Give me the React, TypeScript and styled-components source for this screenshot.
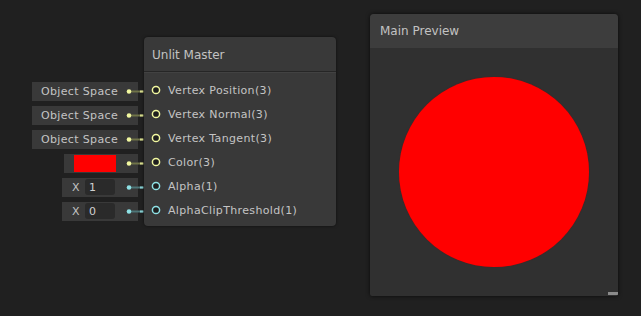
import React from 'react';
import styled, { createGlobalStyle } from 'styled-components';

const GlobalStyle = createGlobalStyle`
  html, body {
    margin: 0;
    padding: 0;
    background: #202020;
  }
  body {
    font-family: "DejaVu Sans", Verdana, sans-serif;
  }
`;

const Canvas = styled.div`
  position: relative;
  width: 641px;
  height: 316px;
  overflow: hidden;
  background: #202020;
`;

const MasterNode = styled.div`
  position: absolute;
  left: 144px;
  top: 37px;
  width: 192px;
  height: 189px;
  background: #393939;
  border-radius: 4px;
  box-shadow: 0 0 3px rgba(0, 0, 0, 0.6);
  display: flex;
  flex-direction: column;
`;

const NodeHeader = styled.div`
  height: 35px;
  display: flex;
  align-items: center;
  padding-left: 8px;
  padding-top: 1px;
  box-sizing: border-box;
  font-size: 12px;
  color: #c2c2c2;
  border-bottom: 1px solid #262626;
  box-shadow: 0 1px 0 #424242;
`;

const SlotList = styled.div`
  display: flex;
  flex-direction: column;
  padding-top: 6px;
`;

const Slot = styled.div`
  height: 24px;
  display: flex;
  align-items: center;
  gap: 7px;
  padding-left: 7px;
  font-size: 11px;
  letter-spacing: 0.35px;
  color: #c4c4c4;
`;

const InputColumn = styled.div`
  position: absolute;
  left: 0;
  top: 79px;
  width: 152px;
  display: flex;
  flex-direction: column;
`;

const InputRow = styled.div`
  height: 24px;
  display: flex;
  align-items: center;
  justify-content: flex-end;
`;

const PropBox = styled.div<{ $width: number }>`
  width: ${(p) => p.$width}px;
  height: 19px;
  background: #393939;
  display: flex;
  align-items: center;
  font-size: 11px;
  letter-spacing: 0.35px;
  color: #c4c4c4;
  box-sizing: border-box;
`;

const BoxLabel = styled.span`
  padding-left: 9px;
  flex: 1;
  white-space: nowrap;
`;

const Swatch = styled.div`
  margin-left: 10px;
  width: 42px;
  height: 17px;
  background: #ff0000;
  flex: none;
`;

const AxisLabel = styled.span`
  padding-left: 10px;
  width: 13px;
  flex: none;
`;

const FloatField = styled.div`
  width: 30px;
  height: 16px;
  background: #2a2a2a;
  border-radius: 3px;
  display: flex;
  align-items: center;
  padding-left: 4px;
  box-sizing: border-box;
  color: #d0d0d0;
  flex: none;
`;

const Spacer = styled.div`
  flex: 1;
`;

const PreviewPanel = styled.div`
  position: absolute;
  left: 370px;
  top: 14px;
  width: 248px;
  height: 282px;
  background: #303030;
  border-radius: 4px 4px 2px 2px;
  box-shadow: 0 0 4px rgba(0, 0, 0, 0.7);
  display: flex;
  flex-direction: column;
  overflow: hidden;
`;

const PreviewHeader = styled.div`
  height: 34px;
  flex: none;
  background: #3d3d3d;
  display: flex;
  align-items: center;
  padding-left: 10px;
  font-size: 12px;
  color: #c2c2c2;
`;

const PreviewBody = styled.div`
  position: relative;
  flex: 1;
  display: flex;
  align-items: center;
  justify-content: center;
`;

const Sphere = styled.div`
  width: 190px;
  height: 190px;
  border-radius: 50%;
  background: #ff0000;
  box-shadow: 0 0 1px #7a1010;
`;

const ResizeHandle = styled.div`
  position: absolute;
  right: 0;
  bottom: 1px;
  width: 10px;
  height: 3px;
  background: #8a8a8a;
`;

type Kind = 'vec' | 'float';

const portColor: Record<Kind, { stroke: string; wire: string; bright: string }> = {
  vec: { stroke: '#f2f8a0', wire: '#6f7348', bright: '#d9df8f' },
  float: { stroke: '#8fe2e6', wire: '#4d7577', bright: '#86cfd3' },
};

function Port({ kind }: { kind: Kind }) {
  const c = portColor[kind];
  return (
    <svg width="10" height="10" viewBox="0 0 10 10">
      <circle cx="5" cy="5" r="3.6" fill="#1e1e1e" stroke={c.stroke} strokeWidth="1.5" />
    </svg>
  );
}

function Knob({ kind }: { kind: Kind }) {
  const c = portColor[kind];
  return (
    <svg width="16" height="19" viewBox="0 0 16 19" style={{ flex: 'none' }}>
      <line x1="9" y1="9.5" x2="16" y2="9.5" stroke={c.wire} strokeWidth="2" />
      <circle cx="7" cy="9.5" r="2.3" fill={c.stroke} />
    </svg>
  );
}

function Wire({ kind }: { kind: Kind }) {
  const c = portColor[kind];
  return (
    <svg width="14" height="19" viewBox="0 0 14 19">
      <line x1="0" y1="9.5" x2="14" y2="9.5" stroke={c.wire} strokeWidth="2" />
      <line x1="2" y1="9.5" x2="5" y2="9.5" stroke={c.bright} strokeWidth="2" />
    </svg>
  );
}

const slots: { name: string; kind: Kind }[] = [
  { name: 'Vertex Position(3)', kind: 'vec' },
  { name: 'Vertex Normal(3)', kind: 'vec' },
  { name: 'Vertex Tangent(3)', kind: 'vec' },
  { name: 'Color(3)', kind: 'vec' },
  { name: 'Alpha(1)', kind: 'float' },
  { name: 'AlphaClipThreshold(1)', kind: 'float' },
];

export default function App() {
  return (
    <>
      <GlobalStyle />
      <Canvas>
        <InputColumn>
          {['Object Space', 'Object Space', 'Object Space'].map((label, i) => (
            <InputRow key={i}>
              <PropBox $width={106}>
                <BoxLabel>{label}</BoxLabel>
                <Knob kind="vec" />
              </PropBox>
              <Wire kind="vec" />
            </InputRow>
          ))}
          <InputRow>
            <PropBox $width={74}>
              <Swatch />
              <Spacer />
              <Knob kind="vec" />
            </PropBox>
            <Wire kind="vec" />
          </InputRow>
          {['1', '0'].map((v) => (
            <InputRow key={v}>
              <PropBox $width={76}>
                <AxisLabel>X</AxisLabel>
                <FloatField>{v}</FloatField>
                <Spacer />
                <Knob kind="float" />
              </PropBox>
              <Wire kind="float" />
            </InputRow>
          ))}
        </InputColumn>

        <MasterNode>
          <NodeHeader>Unlit Master</NodeHeader>
          <SlotList>
            {slots.map((s) => (
              <Slot key={s.name}>
                <Port kind={s.kind} />
                {s.name}
              </Slot>
            ))}
          </SlotList>
        </MasterNode>

        <PreviewPanel>
          <PreviewHeader>Main Preview</PreviewHeader>
          <PreviewBody>
            <Sphere />
            <ResizeHandle />
          </PreviewBody>
        </PreviewPanel>
      </Canvas>
    </>
  );
}
